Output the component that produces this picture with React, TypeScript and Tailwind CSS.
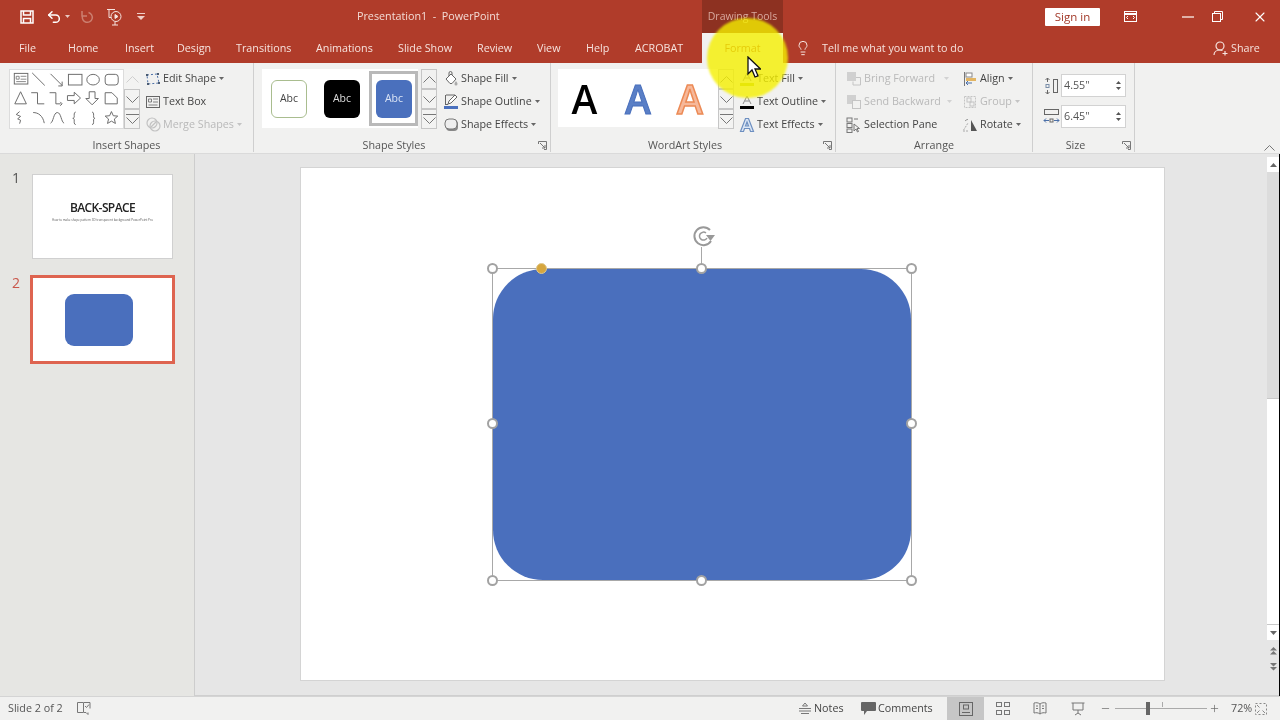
import * as React from 'react'
import { Lightbulb, Minus, Plus, Undo2, X } from 'lucide-react'

const tabs = [
  { label: 'File', w: 'w-[17px]', ml: 'ml-[19px]' },
  { label: 'Home', w: 'w-[32px]', ml: 'ml-[32px]' },
  { label: 'Insert', w: 'w-[27px]', ml: 'ml-[25px]' },
  { label: 'Design', w: 'w-[34px]', ml: 'ml-[25px]' },
  { label: 'Transitions', w: 'w-[55px]', ml: 'ml-[25px]' },
  { label: 'Animations', w: 'w-[57px]', ml: 'ml-[25px]' },
  { label: 'Slide Show', w: 'w-[54px]', ml: 'ml-[25px]' },
  { label: 'Review', w: 'w-[35px]', ml: 'ml-[25px]' },
  { label: 'View', w: 'w-[24px]', ml: 'ml-[25px]' },
  { label: 'Help', w: 'w-[24px]', ml: 'ml-[25px]' },
  { label: 'ACROBAT', w: 'w-[51px]', ml: 'ml-[25px]' },
]

function Caret({ color = '#666' }: { color?: string }) {
  return (
    <svg width="5" height="3" viewBox="0 0 5 3" className="ml-[3px] shrink-0">
      <path d="M0 0h5L2.5 3z" fill={color} />
    </svg>
  )
}

function RibbonBtn({ icon, label, caret = true, disabled = false }: { icon: React.ReactNode; label: string; caret?: boolean; disabled?: boolean }) {
  return (
    <div className={disabled ? 'flex items-center h-[23px] text-[#b9b9b9] whitespace-nowrap' : 'flex items-center h-[23px] text-[#444] whitespace-nowrap'}>
      <span className="w-[16px] h-[16px] mr-[2px] shrink-0 flex items-center justify-center">{icon}</span>
      <span>{label}</span>
      {caret && <Caret color={disabled ? '#c4c4c4' : '#666'} />}
    </div>
  )
}

function Chevron({ up = false, color = '#777' }: { up?: boolean; color?: string }) {
  return (
    <svg width="13" height="7" viewBox="0 0 13 7" fill="none" stroke={color} strokeWidth="1">
      <path d={up ? 'M0.5 6.5L6.5 0.5l6 6' : 'M0.5 0.5l6 6 6-6'} />
    </svg>
  )
}

// scroll / more buttons next to a gallery
function Stepper({ upOff = false }: { upOff?: boolean }) {
  return (
    <div className="w-[16px] h-[60px] flex flex-col shrink-0">
      <div className={upOff ? 'h-[20px] flex items-center justify-center bg-[#f3f3f2]' : 'h-[20px] flex items-center justify-center border border-[#c6c6c6]'}>
        <Chevron up color={upOff ? '#cfcfcf' : '#777'} />
      </div>
      <div className="h-[20px] flex items-center justify-center border border-[#c6c6c6] bg-[#f3f3f2]">
        <Chevron />
      </div>
      <div className="h-[20px] flex flex-col items-center justify-center gap-[2px] border border-[#c6c6c6] bg-[#f3f3f2]">
        <div className="w-[13px] h-px bg-[#777]" />
        <Chevron />
      </div>
    </div>
  )
}

function Launcher() {
  return (
    <svg width="9" height="9" viewBox="0 0 9 9" fill="none" stroke="#777" className="absolute right-[3px] top-[2px]">
      <path d="M.5 3V.5h8v8H6" />
      <path d="M2 2l5 5M7 4v3H4" />
    </svg>
  )
}

function GroupLabel({ text, launcher = false }: { text: string; launcher?: boolean }) {
  return (
    <div className={launcher ? 'relative h-[13px] mt-auto pr-[16px] flex items-center justify-center text-[#555] whitespace-nowrap' : 'relative h-[13px] mt-auto flex items-center justify-center text-[#555] whitespace-nowrap'}>
      {text}
      {launcher && <Launcher />}
    </div>
  )
}

function ShapeGallery() {
  return (
    <svg width="115" height="60" viewBox="9 70 115 60" fill="none" stroke="#6a6a6a" strokeWidth="1" className="bg-white border border-[#dcdcdc] shrink-0">
      <rect x="12.5" y="73.5" width="14" height="11" />
      <path d="M14.5 76.5h3v3h-3zM19 76.5h6M19 79.5h6M14.5 82h10" strokeWidth=".8" />
      <path d="M31 73l13 13" />
      <path d="M50 74l12 12M62 82v4.500h-4" />
      <rect x="68.500" y="74.500" width="14" height="11" />
      <ellipse cx="94" cy="80" rx="6.500" ry="5.500" />
      <rect x="106.500" y="74.500" width="13.500" height="11" rx="3" />
      <path d="M19 92.500l6 12.500H13z" />
      <path d="M30 93.500h6.500v11.500h7" />
      <path d="M49 93.500h6.500v11.500h5M60 103l2 2-2 2" />
      <path d="M67.500 96.500h7v-3.500l6.500 6-6.500 6v-3.500h-7z" />
      <path d="M90 92.500h6v7h3.500l-6.500 6.500-6.500-6.500h3.500z" />
      <path d="M106.500 93.500h7l5.500 5.500v6h-12.500z" />
      <path d="M18 113l-3.500 3 4.500 2-3 2.500 3 1.500 -1 3.500" />
      <path d="M32 114c5 0 10 3 11.500 11" />
      <path d="M50 125c3-1 3-11 7-11s4 10 7 11" />
      <path d="M76 113.500c-2 0-1.500 3.500-1.500 5s-1.500 1.500-1.500 1.500 1.500 0 1.500 1.500-.5 5 1.500 5" />
      <path d="M93 113.500c2 0 1.500 3.500 1.500 5s1.500 1.500 1.500 1.500-1.500 0-1.500 1.500.5 5-1.500 5" />
      <path d="M113 113l1.900 4.300 4.600.4-3.500 3 1.100 4.600-4.100-2.400-4.100 2.400 1.100-4.600-3.500-3 4.600-.4z" />
    </svg>
  )
}

function Swatch({ box, text }: { box: string; text: string }) {
  return (
    <div className={'w-[36px] h-[38px] rounded-[6px] flex items-center justify-center text-[10.500px] ' + box + ' ' + text}>Abc</div>
  )
}

function SizeRow({ icon, value }: { icon: React.ReactNode; value: string }) {
  return (
    <div className="flex items-center h-[23px]">
      <span className="w-[18px] h-[20px] mr-[1px] flex items-center justify-center shrink-0">{icon}</span>
      <div className="w-[65px] h-[23px] bg-white border border-[#d2d2d2] flex items-center justify-between pl-[2px] pr-[4px] text-[#555]">
        <span>{value}</span>
        <span className="flex flex-col gap-[3px]">
          <svg width="5" height="3" viewBox="0 0 5 3"><path d="M2.500 0L5 3H0z" fill="#555" /></svg>
          <svg width="5" height="3" viewBox="0 0 5 3"><path d="M0 0h5L2.500 3z" fill="#555" /></svg>
        </span>
      </div>
    </div>
  )
}

function Ribbon() {
  return (
    <div className="h-[91px] bg-[#f1f1f0] flex border-b border-[#dadada] shrink-0 relative">
      {/* Insert Shapes */}
      <div className="w-[254px] h-[89px] border-r border-[#cfcfcf] flex flex-col shrink-0">
        <div className="flex pl-[9px] pt-[6px]">
          <ShapeGallery />
          <Stepper upOff />
          <div className="ml-[5px] -mt-[2px]">
            <RibbonBtn
              label="Edit Shape"
              icon={
                <svg width="16" height="14" viewBox="0 0 16 14" fill="none" stroke="#4a6fa8">
                  <path d="M2 3l10-1 2 9-11 1z" strokeDasharray="2 2" />
                  <path d="M1 2h2v2H1zM12 1h2v2h-2zM13 10h2v2h-2zM2 11h2v2H2z" fill="#4a5a70" stroke="none" />
                </svg>
              }
            />
            <RibbonBtn
              label="Text Box"
              caret={false}
              icon={
                <svg width="14" height="12" viewBox="0 0 14 12" fill="none" stroke="#666">
                  <rect x=".5" y=".5" width="13" height="11" />
                  <path d="M2.500 3h3v3h-3zM7 3h5M7 6h5M2.500 9h9" strokeWidth=".8" />
                </svg>
              }
            />
            <RibbonBtn
              label="Merge Shapes"
              disabled
              icon={
                <svg width="15" height="15" viewBox="0 0 15 15" fill="none" stroke="#c2c2c2" strokeWidth="1.200">
                  <circle cx="6" cy="6" r="5" />
                  <circle cx="9" cy="9" r="5" />
                  <path d="M5 10l5-5" />
                </svg>
              }
            />
          </div>
        </div>
        <GroupLabel text="Insert Shapes" />
      </div>

      {/* Shape Styles */}
      <div className="w-[297px] h-[89px] border-r border-[#cfcfcf] flex flex-col shrink-0">
        <div className="flex pl-[8px] pt-[6px]">
          <div className="w-[156px] h-[59px] bg-white flex items-center pl-[9px] relative shrink-0">
            <Swatch box="bg-white border border-[#a9bd8f]" text="text-[#444]" />
            <div className="w-[17px]" />
            <Swatch box="bg-black" text="text-[#ddd]" />
            <div className="w-[16px]" />
            <Swatch box="bg-[#4a70bd]" text="text-[#dbe4f5]" />
            <div className="absolute left-[107px] top-[2px] w-[49px] h-[55px] border-[3px] border-[#b9b9b9]" />
          </div>
          <div className="ml-[3px]">
            <Stepper />
          </div>
          <div className="ml-[6px] -mt-[2px]">
            <RibbonBtn
              label="Shape Fill"
              icon={
                <svg width="16" height="16" viewBox="0 0 16 16" fill="none" stroke="#666">
                  <path d="M3 8l5-5 5 5-4 4.500H7z" fill="#fff" />
                  <path d="M6 5V2a1.500 1.500 0 013 0v2" />
                  <path d="M13 10c1 1.500 1.500 2 1.500 3a1.400 1.400 0 01-3 0c0-1 .5-1.500 1.500-3z" fill="#aaa" stroke="none" />
                </svg>
              }
            />
            <RibbonBtn
              label="Shape Outline"
              icon={
                <svg width="16" height="16" viewBox="0 0 16 16" fill="none" stroke="#666">
                  <rect x="1" y="12" width="14" height="3" fill="#4a70bd" stroke="none" />
                  <path d="M3 1h9M2.500 1v10M3 10.500h2" />
                  <path d="M5 10l1-3 6-6 2 2-6 6z" fill="#fff" />
                </svg>
              }
            />
            <RibbonBtn
              label="Shape Effects"
              caret
              icon={
                <svg width="15" height="14" viewBox="0 0 15 14">
                  <rect x="2" y="2" width="12" height="11" rx="4" fill="#888" />
                  <rect x="1" y="1" width="12" height="10" rx="4" fill="#eee" stroke="#777" />
                </svg>
              }
            />
          </div>
        </div>
        <GroupLabel text="Shape Styles" launcher />
      </div>

      {/* WordArt Styles */}
      <div className="w-[285px] h-[89px] border-r border-[#cfcfcf] flex flex-col shrink-0">
        <div className="flex pl-[7px] pt-[6px]">
          <div className="w-[160px] h-[58px] bg-white flex items-center text-[39px] leading-none font-semibold shrink-0">
            <span className="w-[53px] text-center text-black">A</span>
            <span className="w-[54px] text-center text-[#5a7fc6] [-webkit-text-stroke:1px_#4a70bd]">A</span>
            <span className="w-[50px] text-center text-[#f6b89a] [-webkit-text-stroke:1.500px_#ec8a55]">A</span>
          </div>
          <Stepper />
          <div className="ml-[5px] -mt-[2px]">
            <RibbonBtn
              label="Text Fill"
              icon={
                <svg width="16" height="16" viewBox="0 0 16 16" fill="none" stroke="#777">
                  <path d="M4 10l4-8 4 8M6 7h4" />
                  <rect x="1" y="12" width="14" height="3" fill="#b5c22a" stroke="none" />
                </svg>
              }
            />
            <RibbonBtn
              label="Text Outline"
              icon={
                <svg width="16" height="16" viewBox="0 0 16 16" fill="none" stroke="#8a8a8a">
                  <path d="M4 10l4-8 4 8M6 7h4" />
                  <rect x="1" y="12" width="14" height="3" fill="#000" stroke="none" />
                </svg>
              }
            />
            <RibbonBtn
              label="Text Effects"
              icon={
                <svg width="16" height="16" viewBox="0 0 16 16" fill="#dbe6f5" stroke="#6d8fc0" strokeWidth="1.200">
                  <path d="M1.500 14.500L6.500 1.500h3l5 13h-3l-1-3h-5l-1 3z" />
                  <path d="M6.500 9L8 5l1.500 4z" />
                </svg>
              }
            />
          </div>
        </div>
        <GroupLabel text="WordArt Styles" launcher />
      </div>

      {/* Arrange */}
      <div className="w-[197px] h-[89px] border-r border-[#cfcfcf] flex flex-col shrink-0">
        <div className="flex pl-[10px] pt-[4px]">
          <div className="w-[116px]">
            <div className="flex items-center">
              <RibbonBtn
                label="Bring Forward"
                caret={false}
                disabled
                icon={
                  <svg width="16" height="16" viewBox="0 0 16 16" fill="none">
                    <rect x="1" y="1" width="9" height="9" fill="#d0d0d0" />
                    <path d="M10 6.500h4.500V14H7v-3.500" stroke="#c4c4c4" />
                  </svg>
                }
              />
              <span className="ml-[6px]"><Caret color="#d2d2d2" /></span>
            </div>
            <div className="flex items-center">
              <RibbonBtn
                label="Send Backward"
                caret={false}
                disabled
                icon={
                  <svg width="16" height="16" viewBox="0 0 16 16" fill="none">
                    <rect x="1" y="1" width="9" height="9" fill="#d0d0d0" />
                    <rect x="6.500" y="6.500" width="8" height="8" fill="#f1f1f0" stroke="#c4c4c4" />
                  </svg>
                }
              />
              <span className="ml-[3px]"><Caret color="#d2d2d2" /></span>
            </div>
            <RibbonBtn
              label="Selection Pane"
              caret={false}
              icon={
                <svg width="16" height="16" viewBox="0 0 16 16" fill="none" stroke="#777">
                  <rect x="1" y="1" width="5" height="4" />
                  <rect x="1" y="6.500" width="5" height="4" />
                  <rect x="1" y="12" width="5" height="3.500" />
                  <path d="M8 2h4M8 7v7l2-2 1.500 3 1-.5-1.500-3h2.500z" />
                </svg>
              }
            />
          </div>
          <div>
            <RibbonBtn
              label="Align"
              icon={
                <svg width="16" height="16" viewBox="0 0 16 16" fill="none">
                  <path d="M2.500 1v14" stroke="#777" />
                  <rect x="4" y="2" width="6" height="4" fill="#fff" stroke="#888" />
                  <rect x="4" y="7" width="10" height="3" fill="#e3b562" />
                  <path d="M4 12h6M4 12l2-2M4 12l2 2" stroke="#4a6fa8" />
                </svg>
              }
            />
            <RibbonBtn
              label="Group"
              disabled
              icon={
                <svg width="16" height="16" viewBox="0 0 16 16" fill="none" stroke="#c4c4c4">
                  <rect x="2.500" y="2.500" width="11" height="11" strokeDasharray="2 1" />
                  <rect x="5" y="4" width="4" height="4" />
                  <rect x="8" y="8" width="4" height="4" />
                </svg>
              }
            />
            <RibbonBtn
              label="Rotate"
              icon={
                <svg width="16" height="14" viewBox="0 0 16 14" fill="none">
                  <path d="M9 2l6 11H9z" fill="#555" />
                  <path d="M6 13H1l5-8" stroke="#aaa" strokeDasharray="2 1" />
                  <path d="M3 3c1-1 2-1.500 3-1.500" stroke="#888" />
                </svg>
              }
            />
          </div>
        </div>
        <GroupLabel text="Arrange" />
      </div>

      {/* Size */}
      <div className="w-[102px] h-[89px] border-r border-[#cfcfcf] flex flex-col shrink-0">
        <div className="flex flex-col gap-[8px] pl-[9px] pt-[11px]">
          <SizeRow
            value={'4.55"'}
            icon={
              <svg width="16" height="18" viewBox="0 0 16 18" fill="none" stroke="#666">
                <path d="M4.500 1v4M4.500 13v4M2.500 3l2-2 2 2M2.500 15l2 2 2-2" />
                <rect x="3" y="7.500" width="3" height="3" stroke="#7a8ea8" />
                <rect x="10.500" y="2.500" width="4" height="13" />
              </svg>
            }
          />
          <SizeRow
            value={'6.45"'}
            icon={
              <svg width="17" height="18" viewBox="0 0 17 18" fill="none" stroke="#666">
                <rect x="1.500" y="1.500" width="14" height="5" />
                <path d="M1 12.500h5M11 12.500h5M3 10.500l-2 2 2 2M14 10.500l2 2-2 2" stroke="#4a6fa8" />
                <rect x="7" y="11" width="3" height="3" />
              </svg>
            }
          />
        </div>
        <GroupLabel text="Size" launcher />
      </div>

      {/* collapse ribbon */}
      <svg width="11" height="6" viewBox="0 0 11 6" fill="none" stroke="#777" className="absolute left-[1264px] top-[82px]">
        <path d="M.5 5.500l5-5 5 5" />
      </svg>
    </div>
  )
}

function Handle({ className }: { className: string }) {
  return <div className={'absolute w-[11px] h-[11px] rounded-full bg-white border-2 border-[#a2a2a2] ' + className} />
}

function SlideCanvas() {
  return (
    <div className="w-[865px] h-[514px] bg-white border border-[#d4d4d4] relative shrink-0">
      {/* the selected shape sits on a free canvas */}
      <div className="absolute left-[191px] top-[100px] w-[420px] h-[313px] border border-[#a8a8a8]">
        <div className="w-full h-full rounded-[50px] bg-[#4a6fbd]" />
        <div className="absolute left-[208px] -top-[22px] w-px h-[22px] bg-[#a8a8a8]" />
        <svg width="26" height="24" viewBox="0 0 26 24" fill="none" stroke="#999" strokeWidth="2" className="absolute left-[199px] -top-[45px]">
          <path d="M19 17a9 9 0 11-1-11" />
          <path d="M15 14a4 4 0 11-1-5" strokeWidth="1.500" />
          <path d="M14 11h9l-4.500 6z" fill="#999" stroke="none" />
        </svg>
        <Handle className="-left-[6px] -top-[6px]" />
        <Handle className="left-[203px] -top-[6px]" />
        <Handle className="-right-[6px] -top-[6px]" />
        <Handle className="-left-[6px] top-[149px]" />
        <Handle className="-right-[6px] top-[149px]" />
        <Handle className="-left-[6px] -bottom-[6px]" />
        <Handle className="left-[203px] -bottom-[6px]" />
        <Handle className="-right-[6px] -bottom-[6px]" />
        <div className="absolute left-[43px] -top-[6px] w-[11px] h-[11px] rounded-full bg-[#d6a63e] border border-[#e0c98e]" />
      </div>
    </div>
  )
}

function VScroll() {
  return (
    <div className="w-[12px] flex flex-col shrink-0 pt-[3px] text-[#666]">
      <div className="h-[15px] bg-white flex items-center justify-center shrink-0">
        <svg width="7" height="4" viewBox="0 0 7 4"><path d="M3.500 0L7 4H0z" fill="#666" /></svg>
      </div>
      <div className="h-[226px] bg-[#dcdcdc] shrink-0" />
      <div className="h-[227px] bg-white border-y border-[#c8c8c8] shrink-0" />
      <div className="h-[15px] bg-white flex items-center justify-center shrink-0">
        <svg width="7" height="4" viewBox="0 0 7 4"><path d="M0 0h7L3.500 4z" fill="#666" /></svg>
      </div>
      <div className="mt-[7px] flex flex-col items-center gap-[8px]">
        <svg width="7" height="8" viewBox="0 0 7 8" fill="#777"><path d="M3.500 0L7 3.500H0zM3.500 4L7 7.500H0z" /></svg>
        <svg width="7" height="8" viewBox="0 0 7 8" fill="#777"><path d="M0 0h7L3.500 3.500zM0 4h7L3.500 7.500z" /></svg>
      </div>
    </div>
  )
}

function StatusBar() {
  return (
    <div className="h-[24px] bg-[#f1f1f0] border-t border-[#d4d4d4] flex items-center text-[#555] whitespace-nowrap shrink-0">
      <span className="ml-[8px] w-[69px]">Slide 2 of 2</span>
      <svg width="14" height="13" viewBox="0 0 14 13" fill="none" stroke="#777">
        <path d="M.5.500h6v10h-6zM7 .5h6v6M7 10.500h2l2 2v-2" />
        <path d="M8 4l1.500 1.500L12 2.500" />
      </svg>
      <svg width="12" height="11" viewBox="0 0 12 11" fill="none" stroke="#777" className="ml-[708px]">
        <path d="M6 0l2.500 3h-5zM0 5.500h12M0 8h12M2 10.500h8" />
      </svg>
      <span className="ml-[3px] w-[47px] text-[#444]">Notes</span>
      <svg width="15" height="13" viewBox="0 0 15 13" fill="#666">
        <path d="M1 0h13a1 1 0 011 1v7a1 1 0 01-1 1H6l-3 4V9H1a1 1 0 01-1-1V1a1 1 0 011-1z" />
      </svg>
      <span className="ml-[2px] w-[69px] text-[#444]">Comments</span>
      <div className="w-[37px] h-[23px] bg-[#c6c6c6] flex items-center justify-center">
        <svg width="14" height="14" viewBox="0 0 14 14" fill="none" stroke="#666">
          <rect x=".5" y=".5" width="13" height="13" />
          <rect x="4.500" y="3" width="5" height="4" />
          <path d="M3 10.500h8" />
        </svg>
      </div>
      <svg width="14" height="13" viewBox="0 0 14 13" fill="none" stroke="#777" className="ml-[12px]">
        <rect x=".5" y=".5" width="5" height="4" />
        <rect x="8.500" y=".5" width="5" height="4" />
        <rect x=".5" y="8.500" width="5" height="4" />
        <rect x="8.500" y="8.500" width="5" height="4" />
      </svg>
      <svg width="14" height="13" viewBox="0 0 14 13" fill="none" stroke="#777" className="ml-[23px]">
        <path d="M7 2C5 .5 3 .5 1 1v10c2-.5 4-.5 6 1 2-1.500 4-1.500 6-1V1C11 .5 9 .5 7 2zM7 2v10M3 4h2M3 6.500h2M9 4h2M9 6.500h2" />
      </svg>
      <svg width="14" height="14" viewBox="0 0 14 14" fill="none" stroke="#777" className="ml-[24px]">
        <path d="M.5 1h13M2 1v7h10V1M7 8v3M4 13l3-2 3 2" />
      </svg>
      <Minus size={11} strokeWidth={1.500} color="#666" className="ml-[15px]" />
      <div className="ml-[4px] w-[92px] h-[9px] relative flex items-center">
        <div className="w-full h-px bg-[#aaa]" />
        <div className="absolute left-[47px] top-[-2px] w-[1px] h-[5px] bg-[#aaa]" />
        <div className="absolute left-[31px] -top-[2px] w-[4px] h-[13px] bg-[#666]" />
      </div>
      <Plus size={11} strokeWidth={1.500} color="#666" className="ml-[2px]" />
      <span className="ml-[11px] w-[20px] text-[#555]">72%</span>
      <svg width="12" height="12" viewBox="0 0 12 12" fill="none" stroke="#888" className="ml-[4px]">
        <rect x=".5" y=".5" width="11" height="11" strokeDasharray="2 2" />
        <path d="M2 2l2.500 2.500M10 10L7.500 7.500M2 10l2.500-2.500" />
      </svg>
    </div>
  )
}

export default function App() {
  return (
    <div className="w-[1280px] h-[720px] overflow-hidden flex flex-col relative bg-[#e6e6e6] text-[10.750px] leading-none font-['Open_Sans',sans-serif] [filter:blur(0.3px)]">
      {/* Title bar */}
      <div className="h-[33px] bg-[#b03c2a] flex items-center text-[#f3dcd6] whitespace-nowrap shrink-0">
        <svg width="14" height="14" viewBox="0 0 14 14" fill="none" stroke="#fff" strokeWidth="1.500" className="ml-[20px]">
          <path d="M1 1h12v12H1zM3.500 1v4h7V1M3.500 13V8.500h7V13" />
        </svg>
        <Undo2 size={16} strokeWidth={2.200} color="#fff" className="ml-[12px]" />
        <Caret color="#e9c9c2" />
        <svg width="14" height="14" viewBox="0 0 14 14" fill="none" stroke="#cb7f70" strokeWidth="1.500" className="ml-[10px]">
          <path d="M8.500 2.500A5 5 0 112.500 6M2 1v5h5" />
        </svg>
        <svg width="16" height="18" viewBox="0 0 16 18" fill="none" stroke="#f5e3df" className="ml-[13px]">
          <path d="M0 1.500h8M2 1.500v8h2M8 14v3M5 17h6" />
          <circle cx="9" cy="8.500" r="5" />
          <path d="M8 6.500v4l3-2z" fill="#f5e3df" />
        </svg>
        <svg width="8" height="8" viewBox="0 0 8 8" fill="#f0cfc8" className="ml-[14px]">
          <path d="M0 0h8v1H0zM0 3h8L4 7z" />
        </svg>
        <span className="ml-[212px] w-[345px]">Presentation1&nbsp; -&nbsp; PowerPoint</span>
        <div className="w-[81px] h-[33px] bg-[#8d3121] flex items-center justify-center text-[#d9a99e] text-[10.500px]">Drawing Tools</div>
        <div className="ml-[262px] w-[55px] h-[18px] bg-white text-[#a33a2a] flex items-center justify-center rounded-[1px] text-[11.500px]">Sign in</div>
        <svg width="13" height="11" viewBox="0 0 13 11" fill="none" stroke="#fff" className="ml-[24px]">
          <rect x=".5" y=".5" width="12" height="10" />
          <path d="M.5 3h12" strokeWidth="2" />
          <path d="M4 5l-1.500 1.500L4 8M9 5l1.500 1.500L9 8" />
        </svg>
        <svg width="12" height="2" viewBox="0 0 12 2" className="ml-[45px]"><path d="M0 1h12" stroke="#f1d8d2" strokeWidth="1.500" /></svg>
        <svg width="11" height="11" viewBox="0 0 11 11" fill="none" stroke="#fff" className="ml-[18px]">
          <rect x=".5" y="2.500" width="8" height="8" />
          <path d="M2.500 2.500v-2h8v8h-2" />
        </svg>
        <X size={16} strokeWidth={1.600} color="#fff" className="ml-[29px]" />
      </div>

      {/* Tab row */}
      <div className="h-[30px] bg-[#b03c2a] flex items-center text-[#f6e3de] whitespace-nowrap shrink-0 relative">
        {tabs.map((t) => (
          <span key={t.label} className={t.w + ' ' + t.ml}>{t.label}</span>
        ))}
        <div className="ml-[16px] w-[81px] h-[30px] bg-[#f1f1f0] flex items-center justify-center text-[#a33a2a]">Format</div>
        <Lightbulb size={16} strokeWidth={1.500} color="#f6e3de" className="ml-[12px]" />
        <span className="ml-[11px] w-[308px]">Tell me what you want to do</span>
        <svg width="15" height="15" viewBox="0 0 15 15" fill="none" stroke="#f6e3de" strokeWidth="1.200" className="ml-[83px]">
          <circle cx="7" cy="5" r="4" />
          <path d="M1 14c0-3 2.500-5 6-5 1 0 2 .2 2.500.5M12 10v4.500M9.500 12.500h5" />
        </svg>
        <span className="ml-[3px]">Share</span>
      </div>

      <Ribbon />

      {/* Work area */}
      <div className="flex-1 flex min-h-0 border-r border-black">
        {/* Thumbnails */}
        <div className="w-[195px] border-r border-[#cdcdcd] bg-[#e6e6e3] pt-[20px] flex flex-col gap-[16px] shrink-0">
          <div className="flex">
            <span className="ml-[12px] w-[20px] -mt-[3px] text-[14px] text-[#555]">1</span>
            <div className="w-[141px] h-[85px] bg-white border border-[#d0d0d0] flex flex-col items-center pt-[27px] overflow-hidden">
              <span className="text-[12px] font-semibold tracking-[-0.6px] text-[#222]">BACK-SPACE</span>
              <span className="text-[3px] mt-[5px] text-[#555] whitespace-nowrap">How to make shape pattern 3D transparent background PowerPoint Pro</span>
            </div>
          </div>
          <div className="flex">
            <span className="ml-[12px] w-[18px] text-[14px] text-[#c9564a] pt-[1px]">2</span>
            <div className="w-[145px] h-[89px] bg-white border-[3px] border-[#de6450] pl-[32px] pt-[16px]">
              <div className="w-[68px] h-[52px] rounded-[9px] bg-[#4a6fbd]" />
            </div>
          </div>
        </div>

        {/* Slide */}
        <div className="flex-1 min-w-0 flex flex-col">
          <div className="flex-1 flex min-h-0">
            <div className="flex-1 pl-[105px] pt-[13px]">
              <SlideCanvas />
            </div>
            <VScroll />
          </div>
          <div className="h-[3px] border-b border-[#cfcfcf] shrink-0" />
        </div>
      </div>

      <StatusBar />

      {/* yellow cursor highlight and pointer from the screen recording */}
      <div className="absolute left-[707px] top-[18px] w-[81px] h-[80px] rounded-full bg-[#f5f000]/80 blur-[1px]" />
      <svg width="14" height="22" viewBox="0 0 14 22" className="absolute left-[747px] top-[56px]">
        <path d="M1 1v17l4-4 3 7 3-1.200-3-6.800h5.500z" fill="#fff" stroke="#111" strokeWidth="1.300" />
      </svg>
    </div>
  )
}
